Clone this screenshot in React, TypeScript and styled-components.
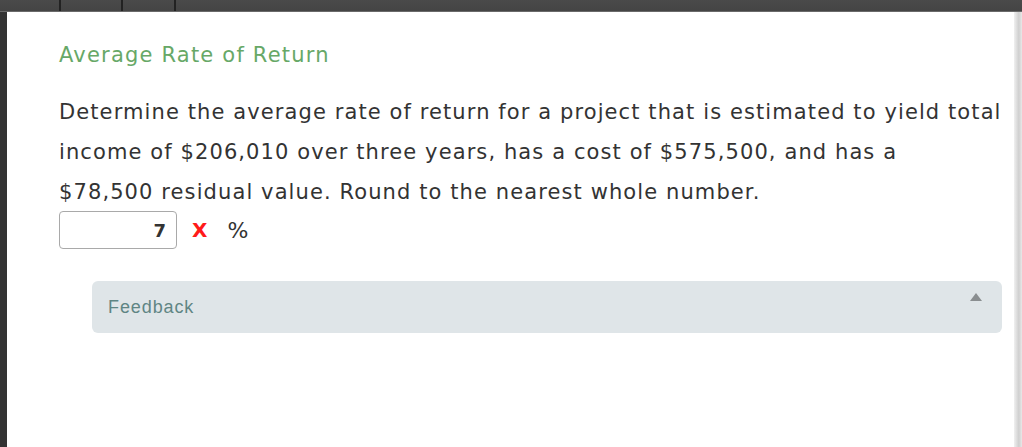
import React from 'react';
import styled, { createGlobalStyle } from 'styled-components';

const GlobalStyle = createGlobalStyle`
  html, body {
    margin: 0;
    padding: 0;
    background: #333333;
    overflow: hidden;
  }
`;

const Frame = styled.div`
  width: 1022px;
  height: 447px;
  display: flex;
  flex-direction: column;
  background: #333333;
`;

const TopBar = styled.div`
  height: 12px;
  display: flex;
  background: linear-gradient(#4a4a4a, #444444);
  border-bottom: 1px solid #6a6a6a;
  box-sizing: border-box;
`;

const TopTab = styled.div<{ $w: number }>`
  width: ${p => p.$w}px;
  border-right: 2px solid #222222;
`;

const Body = styled.div`
  flex: 1;
  display: flex;
  padding-left: 7px;
`;

const Page = styled.div`
  flex: 1;
  background: #ffffff;
  padding: 28px 0 0 52px;
  font-family: "DejaVu Sans", Verdana, sans-serif;
`;

const Scroll = styled.div`
  width: 8px;
  background: linear-gradient(90deg, #f0f0f0, #cfcfcf 60%, #e8e8e8);
`;

const Title = styled.h1`
  margin: 0;
  font-size: 21px;
  letter-spacing: 1.2px;
  font-weight: normal;
  color: #67a867;
  line-height: 30px;
`;

const Question = styled.p`
  margin: 22px 0 0;
  font-size: 21px;
  letter-spacing: 1.1px;
  line-height: 40px;
  color: #333333;
  white-space: nowrap;
`;

const AnswerRow = styled.div`
  display: flex;
  align-items: center;
  margin-top: -1px;
`;

const AnswerInput = styled.div`
  width: 118px;
  height: 38px;
  box-sizing: border-box;
  border: 1px solid #a9a9a9;
  border-radius: 4px;
  display: flex;
  align-items: center;
  justify-content: flex-end;
  padding-right: 10px;
  font-weight: bold;
  font-size: 18px;
  color: #333333;
`;

const WrongMark = styled.span`
  margin-left: 15px;
  color: #ff1a1a;
  font-weight: bold;
  font-size: 20px;
`;

const Unit = styled.span`
  margin-left: 20px;
  font-size: 22px;
  letter-spacing: 1px;
  color: #333333;
`;

const Feedback = styled.div`
  margin: 32px 0 0 33px;
  width: 910px;
  height: 52px;
  box-sizing: border-box;
  background: #dfe5e8;
  border-radius: 6px;
  display: flex;
  align-items: center;
  justify-content: space-between;
  padding: 0 20px 0 16px;
  font-family: "Liberation Sans", Arial, sans-serif;
  font-size: 18px;
  letter-spacing: 0.9px;
  color: #5f8584;
`;

const Caret = styled.span`
  width: 0;
  height: 0;
  border-left: 6px solid transparent;
  border-right: 6px solid transparent;
  border-bottom: 8px solid #8a8e90;
  margin-top: -20px;
`;

export default function App() {
  return (
    <>
      <GlobalStyle />
      <Frame>
        <TopBar>
          <TopTab $w={59} />
          <TopTab $w={60} />
          <TopTab $w={51} />
        </TopBar>
        <Body>
          <Page>
            <Title>Average Rate of Return</Title>
            <Question>
              Determine the average rate of return for a project that is estimated to yield total
              <br />
              income of $206,010 over three years, has a cost of $575,500, and has a
              <br />
              $78,500 residual value. Round to the nearest whole number.
            </Question>
            <AnswerRow>
              <AnswerInput>7</AnswerInput>
              <WrongMark>X</WrongMark>
              <Unit>%</Unit>
            </AnswerRow>
            <Feedback>
              Feedback
              <Caret />
            </Feedback>
          </Page>
          <Scroll />
        </Body>
      </Frame>
    </>
  );
}
